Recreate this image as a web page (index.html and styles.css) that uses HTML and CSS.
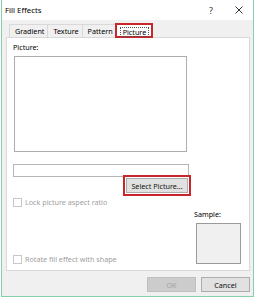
FILE: index.html
```html
<!DOCTYPE html>
<html>
<head>
<meta charset="utf-8">
<link rel="stylesheet" href="styles.css">
</head>
<body>
<div class="window">
  <div class="titlebar">
    <span class="title">Fill Effects</span>
    <span class="help">?</span>
    <span class="close"><svg width="8" height="8" viewBox="0 0 8 8"><path d="M0.5 0.5L7.5 7.5M7.5 0.5L0.5 7.5" stroke="#333" stroke-width="1" fill="none"/></svg></span>
  </div>
  <div class="body">
    <div class="tabs">
      <div class="tab">Gradient</div>
      <div class="tab">Texture</div>
      <div class="tab">Pattern</div>
      <div class="tab active"><span class="focus">Picture</span></div>
    </div>
    <div class="panel">
      <div class="label">Picture:</div>
      <div class="picbox"></div>
      <div class="field"></div>
      <div class="btnrow"><div class="btn select">Select Picture...</div></div>
      <div class="check disabled lock"><span class="box"></span><span>Lock picture aspect ratio</span></div>
      <div class="bottomrow">
        <div class="check disabled"><span class="box"></span><span>Rotate fill effect with shape</span></div>
        <div class="sample">
          <div class="samplelabel">Sample:</div>
          <div class="samplebox"></div>
        </div>
      </div>
    </div>
    <div class="footer">
      <div class="btn ok">OK</div>
      <div class="btn">Cancel</div>
    </div>
  </div>
</div>
</body>
</html>
```

FILE: styles.css
```css
* { box-sizing: border-box; }
html, body { margin: 0; padding: 0; background: #fff; }
body {
  font-family: "Noto Sans", "Open Sans", sans-serif;
  font-size: 7.2px;
  color: #000;
}
.window {
  margin-left: 1px;
  width: 253px;
  height: 297px;
  border: 1px solid #86cfaa;
  border-top: none;
  display: flex;
  flex-direction: column;
}
.titlebar {
  height: 20px;
  background: #fff;
  display: flex;
  align-items: center;
  padding-left: 3px;
  flex: none;
}
.title { font-size: 7.8px; flex: 1; }
.help { font-size: 9px; margin-right: 22px; color: #333; }
.close { display: flex; margin-right: 10px; }
.body {
  flex: 1;
  background: #f0f0f0;
  padding: 4px 3px 4px 4px;
  display: flex;
  flex-direction: column;
}
.tabs {
  display: flex;
  height: 13px;
  padding-left: 3px;
  position: relative;
  z-index: 1;
}
.tab {
  height: 13px;
  line-height: 12px;
  padding: 0 3px 0 5px;
  border: 1px solid #d9d9d9;
  border-bottom: none;
  margin-right: -1px;
  background: #f0f0f0;
}
.tab.active {
  background: #fff;
  height: 15px;
  margin-top: -1px;
  margin-left: -1px;
  padding: 2px 2px 0 3px;
  line-height: 9px;
  border: 2px solid #c9262c;
}
.focus {
  display: inline-block;
  border: 1px dotted #555;
  padding: 0 2px;
  line-height: 8px;
}
.panel {
  flex: none;
  height: 234px;
  background: #fff;
  border: 1px solid #d9d9d9;
  padding: 4px 6px 0;
  display: flex;
  flex-direction: column;
}
.label { line-height: 10px; }
.picbox {
  margin: 4px 0 0 1px;
  width: 173px;
  height: 96px;
  border: 1px solid #adadad;
}
.field {
  margin-top: 12px;
  width: 176px;
  height: 13px;
  border: 1px solid #b5b5b5;
}
.btnrow {
  width: 175px;
  display: flex;
  justify-content: flex-end;
  margin-top: 1px;
}
.btn {
  height: 15px;
  border: 1px solid #adadad;
  background: #e1e1e1;
  display: flex;
  align-items: center;
  justify-content: center;
  color: #111;
}
.select {
  width: 62px;
  outline: 2px solid #c9262c;
  outline-offset: 1px;
}
.check {
  display: flex;
  align-items: center;
  gap: 3px;
  height: 10px;
}
.check.disabled { color: #a0a0a0; }
.box {
  width: 9px;
  height: 9px;
  border: 1px solid #c8c8c8;
  background: #fff;
  flex: none;
}
.lock { margin-top: 4px; }
.bottomrow {
  flex: 1;
  display: flex;
  justify-content: space-between;
  align-items: flex-end;
  padding-bottom: 6px;
}
.sample {
  display: flex;
  flex-direction: column;
  width: 49px;
}
.samplelabel { line-height: 10px; margin-bottom: 4px; }
.samplebox {
  margin-left: 2px;
  width: 45px;
  height: 41px;
  border: 1px solid #9a9a9a;
  background: #f0f0f0;
}
.footer {
  margin-top: 6px;
  display: flex;
  justify-content: flex-end;
  gap: 5px;
}
.footer .btn { width: 49px; }
.ok {
  background: #cccccc;
  border-color: #bfbfbf;
  color: #a3a3a3;
}
```
